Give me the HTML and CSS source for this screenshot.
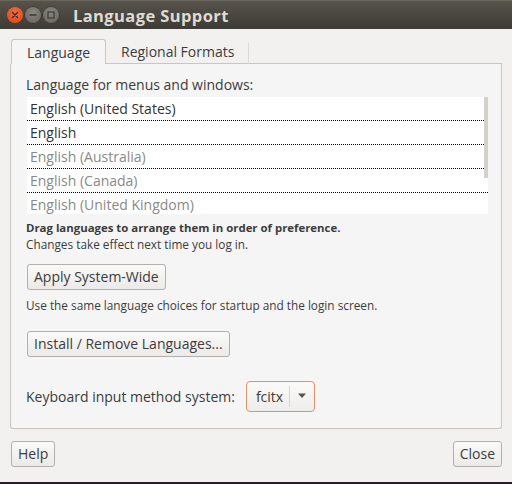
FILE: index.html
```html
<!DOCTYPE html>
<html>
<head>
<meta charset="utf-8">
<link rel="stylesheet" href="styles.css">
</head>
<body>
<div class="window">
  <div class="titlebar">
    <div class="wbtns">
      <span class="wb close"><svg width="16" height="16" viewBox="0 0 16 16"><path d="M5.5 5.5 L10.5 10.5 M10.5 5.5 L5.5 10.5" stroke="#3a2a22" stroke-width="1.3" stroke-linecap="round"/></svg></span>
      <span class="wb grey"><svg width="16" height="16" viewBox="0 0 16 16"><path d="M4.5 8 H11.5" stroke="#3c3b37" stroke-width="1.6"/></svg></span>
      <span class="wb grey"><svg width="16" height="16" viewBox="0 0 16 16"><rect x="5" y="5" width="6" height="6" fill="none" stroke="#3c3b37" stroke-width="1.2"/></svg></span>
    </div>
    <div class="title">Language Support</div>
  </div>
  <div class="content">
    <div class="tabs">
      <div class="tab active">Language</div>
      <div class="tab">Regional Formats</div>
      <div class="tabfill"></div>
    </div>
    <div class="panel">
      <div class="label">Language for menus and windows:</div>
      <div class="list">
        <div class="rows">
          <div class="row dark">English (United States)</div>
          <div class="row dark">English</div>
          <div class="row">English (Australia)</div>
          <div class="row">English (Canada)</div>
          <div class="row last">English (United Kingdom)</div>
        </div>
        <div class="scroll"></div>
      </div>
      <div class="hint bold">Drag languages to arrange them in order of preference.</div>
      <div class="hint">Changes take effect next time you log in.</div>
      <div class="btnrow first"><span class="btn">Apply System-Wide</span></div>
      <div class="hint use">Use the same language choices for startup and the login screen.</div>
      <div class="btnrow second"><span class="btn">Install / Remove Languages...</span></div>
      <div class="kbd">
        <span class="kbdlabel">Keyboard input method system:</span>
        <span class="combo"><span class="cval">fcitx</span><span class="csep"></span><svg width="10" height="6" viewBox="0 0 10 6"><path d="M1 0.5 H9 L5 5 Z" fill="#555"/></svg></span>
      </div>
    </div>
    <div class="footer">
      <span class="btn small">Help</span>
      <span class="btn small">Close</span>
    </div>
  </div>
</div>
</body>
</html>
```
FILE: styles.css
```css
html, body {
  margin: 0;
  padding: 0;
  background: #2c1d24;
}
body {
  width: 512px;
  height: 484px;
  overflow: hidden;
  font-family: "Open Sans", "Noto Sans", sans-serif;
  color: #3c3c3c;
}
.window {
  width: 512px;
  height: 482px;
  background: #f2f1f0;
  display: flex;
  flex-direction: column;
}
.titlebar {
  height: 29px;
  background: linear-gradient(#57534b, #3d3b36);
  display: flex;
  align-items: center;
  border-top: 1px solid #6a665e;
  box-sizing: border-box;
}
.wbtns {
  display: flex;
  gap: 2px;
  margin-left: 7px;
}
.wb {
  width: 16px;
  height: 16px;
  border-radius: 50%;
  display: flex;
}
.wb.close {
  background: radial-gradient(circle at 50% 35%, #f26d3d, #d8451d);
  box-shadow: 0 0 0 0.5px #8a3418;
}
.wb.grey {
  background: radial-gradient(circle at 50% 35%, #8a8780, #64615b);
  box-shadow: 0 0 0 0.5px #2e2d2a;
}
.title {
  margin-left: 14px;
  color: #dfdbd2;
  font-weight: bold;
  font-size: 16.5px;
  letter-spacing: 0.4px;
}
.content {
  flex: 1;
  display: flex;
  flex-direction: column;
  padding: 10px 10px 0 10px;
}
.tabs {
  display: flex;
  height: 25px;
  align-items: flex-end;
}
.tab {
  font-size: 14px;
  height: 24px;
  line-height: 24px;
  padding: 0 15px 0 15px;
  color: #3c3c3c;
  border-bottom: 1px solid #c9c6c1;
  box-sizing: border-box;
  position: relative;
}
.tab.active {
  width: 95px;
  padding-left: 15px;
  background: #f5f5f5;
  border: 1px solid #c9c6c1;
  border-bottom: none;
  border-radius: 3px 3px 0 0;
  height: 25px;
  line-height: 25px;
  margin-left: 1px;
}
.tab:not(.active)::after {
  content: "";
  position: absolute;
  right: 0;
  top: 3px;
  height: 21px;
  border-right: 1px solid #dcdad6;
}
.tabfill {
  flex: 1;
  height: 24px;
  border-bottom: 1px solid #c9c6c1;
  box-sizing: border-box;
}
.panel {
  height: 365px;
  box-sizing: border-box;
  background: #f5f5f5;
  border: 1px solid #c9c6c1;
  border-top: none;
  border-radius: 0 0 3px 3px;
  padding: 11px 14px 0 15px;
}
.label {
  font-size: 14px;
  line-height: 20px;
}
.list {
  margin-top: 2px;
  margin-left: 1px;
  width: 461px;
  height: 117px;
  background: #fff;
  display: flex;
  position: relative;
}
.rows {
  flex: 1;
}
.row {
  height: 24px;
  line-height: 23px;
  font-size: 14px;
  padding-left: 3px;
  color: #8a8a8a;
  border-bottom: 1px dotted #000;
  box-sizing: border-box;
}
.row.dark {
  color: #333;
}
.row.last {
  border-bottom: none;
}
.scroll {
  position: absolute;
  right: 0;
  top: 0;
  width: 4px;
  height: 81px;
  background: #d4d0cc;
}
.hint {
  font-size: 11.8px;
  line-height: 16px;
}
.hint.bold {
  font-weight: bold;
  font-size: 11.4px;
  margin-top: 6px;
}
.btnrow.first {
  margin-top: 12px;
}
.btnrow.second {
  margin-top: 18px;
}
.btn {
  display: inline-block;
  font-size: 14px;
  height: 26px;
  line-height: 24px;
  padding: 0 6px;
  box-sizing: border-box;
  border: 1px solid #b3afaa;
  border-radius: 3px;
  background: linear-gradient(#fafaf9, #eceae8);
  margin-left: 1px;
  color: #3c3c3c;
}
.hint.use {
  margin-top: 7px;
}
.kbd {
  margin-top: 23px;
  display: flex;
  align-items: center;
  height: 32px;
}
.kbdlabel {
  font-size: 14px;
}
.combo {
  margin-left: 11px;
  height: 31px;
  width: 69px;
  box-sizing: border-box;
  border: 1px solid #e0906a;
  border-radius: 4px;
  background: linear-gradient(#fafaf9, #efedeb);
  display: flex;
  align-items: center;
  padding-left: 9px;
  font-size: 14px;
}
.csep {
  width: 1px;
  height: 21px;
  background: #d8d5d1;
  margin: 0 7px 0 6px;
}
.footer {
  display: flex;
  justify-content: space-between;
  margin-top: 12px;
  padding: 0 0 0 1px;
}
.btn.small {
  margin-left: 0;
  padding: 0 6px;
}
```
